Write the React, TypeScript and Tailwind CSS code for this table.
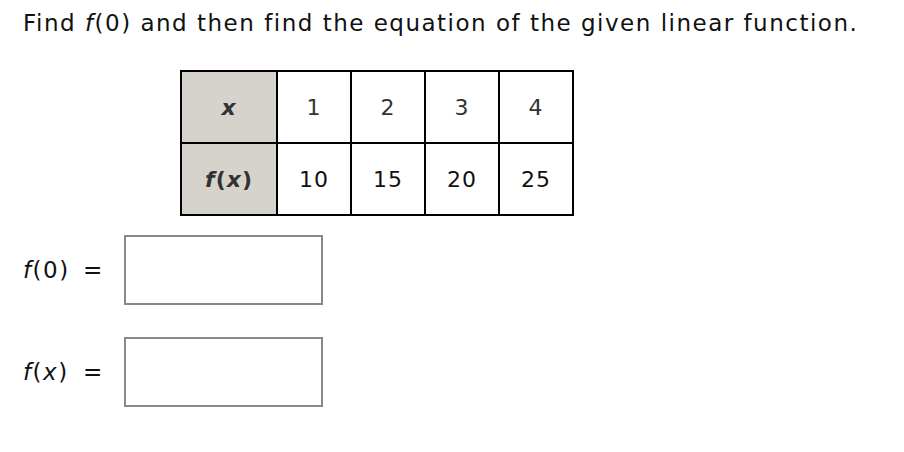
import React from "react";

const font = { fontFamily: '"DejaVu Sans", Verdana, sans-serif' };

export default function App() {
  const xs = ["1", "2", "3", "4"];
  const fs = ["10", "15", "20", "25"];
  return (
    <div className="w-[904px] h-[452px] bg-white text-black pt-[10px]" style={font}>
      <div className="pl-[23px] text-[23px] leading-[26px] tracking-[1.5px] text-[#111] whitespace-nowrap">
        Find <i>f</i>(0) and then find the equation of the given linear function.
      </div>
      <div className="mt-[34px] ml-[180px] w-[394px] grid grid-cols-[94px_72px_72px_72px_72px] grid-rows-[70px_70px] gap-[2px] p-[2px] bg-black text-[22px] tracking-[1px]">
        <div className="bg-[#d6d3cd] flex items-center justify-center font-bold italic text-[#333]">x</div>
        {xs.map((v) => (
          <div key={v} className="bg-white flex items-center justify-center text-[#333]">{v}</div>
        ))}
        <div className="bg-[#d6d3cd] flex items-center justify-center font-bold text-[#333]">
          <i>f</i>(<i>x</i>)
        </div>
        {fs.map((v) => (
          <div key={v} className="bg-white flex items-center justify-center text-[#111]">{v}</div>
        ))}
      </div>
      <div className="mt-[19px] flex flex-col gap-[32px]">
        <div className="flex items-center pl-[23px] text-[23px] tracking-[1.5px] text-[#111]">
          <span className="w-[60px]"><i>f</i>(0)</span>
          <span className="w-[41px]">=</span>
          <div className="w-[199px] h-[70px] border-2 border-[#888] bg-white" />
        </div>
        <div className="flex items-center pl-[23px] text-[23px] tracking-[1.5px] text-[#111]">
          <span className="w-[60px]"><i>f</i>(<i>x</i>)</span>
          <span className="w-[41px]">=</span>
          <div className="w-[199px] h-[70px] border-2 border-[#888] bg-white" />
        </div>
      </div>
    </div>
  );
}
